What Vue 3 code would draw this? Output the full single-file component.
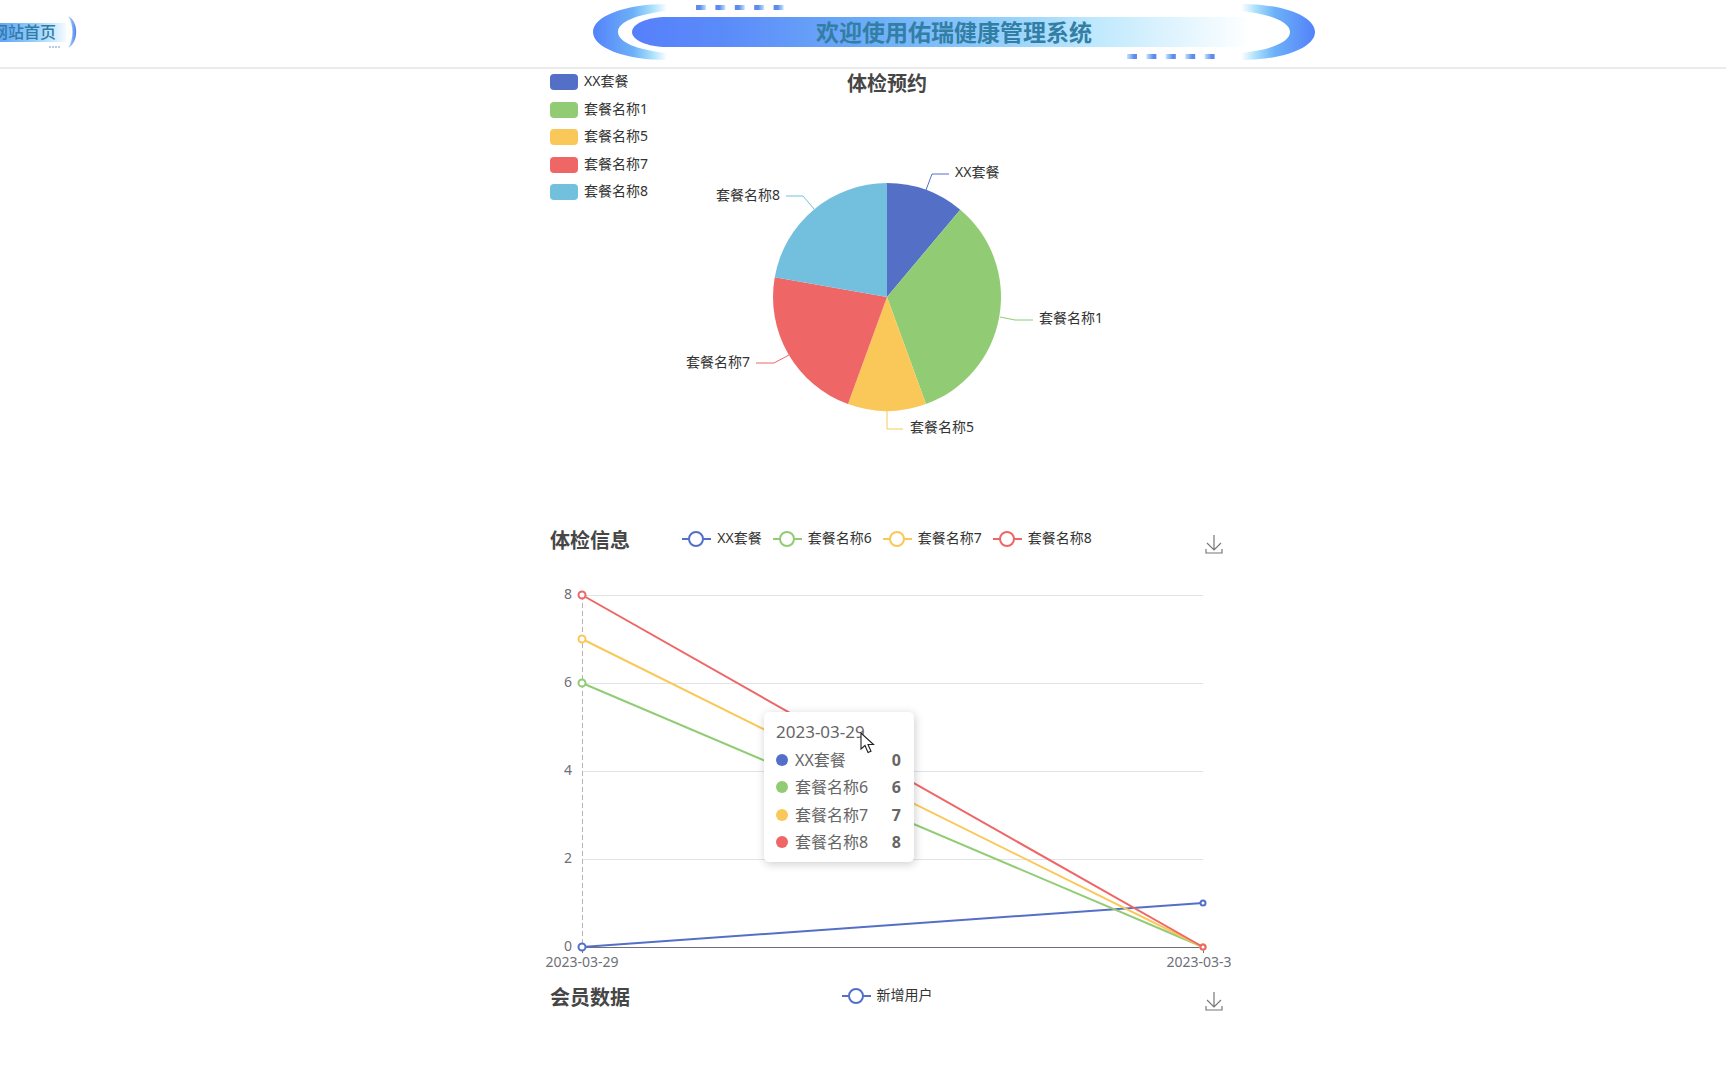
<script setup>
const palette = {
  blue: '#5470c6',
  green: '#91cc75',
  yellow: '#fac858',
  red: '#ee6666',
  cyan: '#73c0de'
}

const pie = { cx: 344, cy: 229, r: 114 }

const packages = [
  { name: 'XX套餐', count: 1, color: palette.blue, leader: '383,122 389,106 406,106', x: 412, y: 109, anchor: 'start' },
  { name: '套餐名称1', count: 3, color: palette.green, leader: '457,249 472,252 490,252', x: 496, y: 255, anchor: 'start' },
  { name: '套餐名称5', count: 1, color: palette.yellow, leader: '344,343 344,361 360,361', x: 367, y: 364, anchor: 'start' },
  { name: '套餐名称7', count: 2, color: palette.red, leader: '246,287 231,295 213,295', x: 207, y: 299, anchor: 'end' },
  { name: '套餐名称8', count: 2, color: palette.cyan, leader: '271,141 260,128 243,128', x: 237, y: 132, anchor: 'end' }
]

const total = packages.reduce((sum, p) => sum + p.count, 0)
let passed = 0
const slices = packages.map((p) => {
  const from = (passed / total) * Math.PI * 2
  passed += p.count
  const to = (passed / total) * Math.PI * 2
  const point = (a) => `${pie.cx + pie.r * Math.sin(a)},${pie.cy - pie.r * Math.cos(a)}`
  const large = to - from > Math.PI ? 1 : 0
  return { ...p, d: `M${pie.cx},${pie.cy} L${point(from)} A${pie.r},${pie.r} 0 ${large} 1 ${point(to)} Z` }
})

const plot = { left: 39, right: 660, bottom: 421, unit: 44 }
const yOf = (value) => plot.bottom - value * plot.unit
const ticks = [0, 2, 4, 6, 8]

const series = [
  { name: 'XX套餐', color: palette.blue, values: [0, 1] },
  { name: '套餐名称6', color: palette.green, values: [6, 0] },
  { name: '套餐名称7', color: palette.yellow, values: [7, 0] },
  { name: '套餐名称8', color: palette.red, values: [8, 0] }
]

const members = [{ name: '新增用户', color: palette.blue }]

const dots = [0, 1, 2, 3, 4]
</script>

<template>
  <div class="page">
    <header class="topbar">
      <nav class="nav">
        <a class="home" href="#">
          <svg class="home-frame" width="80" height="40" viewBox="0 0 80 40" aria-hidden="true">
            <defs>
              <linearGradient id="homePill" x1="0" x2="1">
                <stop offset="0" stop-color="#62a4f8" />
                <stop offset="0.5" stop-color="#93ccfa" />
                <stop offset="1" stop-color="#f2fbff" />
              </linearGradient>
              <linearGradient id="homeArc" x1="0" x2="1">
                <stop offset="0" stop-color="#b5e2fc" />
                <stop offset="1" stop-color="#4f80ee" />
              </linearGradient>
            </defs>
            <rect x="0" y="11" width="66" height="19" fill="url(#homePill)" />
            <path d="M68 4 C79 9 79 31 68 36 C74 27 74 13 68 4Z" fill="url(#homeArc)" />
            <g fill="#b9cbe0">
              <rect v-for="i in 4" :key="i" :x="46 + i * 3" y="34" width="2" height="2" />
            </g>
          </svg>
          <span class="home-label">网站首页</span>
        </a>
      </nav>
      <div class="banner">
        <svg class="banner-frame" width="722" height="60" viewBox="0 0 722 60" aria-hidden="true">
          <defs>
            <linearGradient id="pill" x1="0" x2="1">
              <stop offset="0" stop-color="#5680fb" />
              <stop offset="0.15" stop-color="#5b8bf9" />
              <stop offset="0.4" stop-color="#6eaff8" />
              <stop offset="0.58" stop-color="#8fcdfb" />
              <stop offset="0.74" stop-color="#bde8fd" />
              <stop offset="1" stop-color="#ffffff" />
            </linearGradient>
            <linearGradient id="arcLeft" x1="0" x2="1">
              <stop offset="0" stop-color="#5382fa" />
              <stop offset="0.55" stop-color="#6db1f8" />
              <stop offset="0.8" stop-color="#a9e0fc" />
              <stop offset="1" stop-color="#ffffff" />
            </linearGradient>
            <linearGradient id="arcRight" x1="1" x2="0">
              <stop offset="0" stop-color="#5382fa" />
              <stop offset="0.55" stop-color="#6db1f8" />
              <stop offset="0.8" stop-color="#a9e0fc" />
              <stop offset="1" stop-color="#ffffff" />
            </linearGradient>
            <linearGradient id="dashTop" x1="0" x2="1">
              <stop offset="0.4" stop-color="#5d8bee" />
              <stop offset="1" stop-color="#c3e6fb" />
            </linearGradient>
            <linearGradient id="dashBottom" x1="1" x2="0">
              <stop offset="0.3" stop-color="#5d8bee" />
              <stop offset="1" stop-color="#c3e6fb" />
            </linearGradient>
          </defs>
          <path d="M74 2 C30 2 0 15 0 30 C0 45 30 58 74 58 L74 51 C44 48 25 40 25 30 C25 20 44 12 74 9Z" fill="url(#arcLeft)" />
          <path d="M648 2 C692 2 722 15 722 30 C722 45 692 58 648 58 L648 51 C678 48 697 40 697 30 C697 20 678 12 648 9Z" fill="url(#arcRight)" />
          <path d="M658 15 H74 C54 15 39 22 39 30 C39 38 54 45 74 45 H658Z" fill="url(#pill)" />
          <rect v-for="i in dots" :key="'t' + i" :x="103 + i * 19.4" y="3" width="10" height="5" fill="url(#dashTop)" />
          <rect v-for="i in dots" :key="'b' + i" :x="534 + i * 19.4" y="52" width="10" height="5" fill="url(#dashBottom)" />
        </svg>
        <h1 class="banner-title">欢迎使用佑瑞健康管理系统</h1>
      </div>
    </header>

    <main class="content">
      <section class="chart">
        <div class="chart-head">
          <h2 class="title centered">体检预约</h2>
          <ul class="legend vertical">
            <li v-for="p in packages" :key="p.name">
              <i class="swatch" :style="{ background: p.color }"></i>
              <span>{{ p.name }}</span>
            </li>
          </ul>
        </div>
        <svg class="plot" viewBox="0 1 688 457" role="img" aria-label="体检预约">
          <path v-for="s in slices" :key="s.name" :d="s.d" :fill="s.color" />
          <g v-for="s in slices" :key="s.name + '-label'">
            <polyline :points="s.leader" fill="none" :stroke="s.color" stroke-width="1" />
            <text class="pie-label" :x="s.x" :y="s.y" :text-anchor="s.anchor">{{ s.name }}</text>
          </g>
        </svg>
      </section>

      <section class="chart">
        <div class="chart-head">
          <h2 class="title">体检信息</h2>
          <ul class="legend">
            <li v-for="s in series" :key="s.name">
              <svg width="29" height="16" viewBox="0 0 29 16" aria-hidden="true">
                <path d="M0 8H29" :stroke="s.color" stroke-width="2" />
                <circle cx="14" cy="8" r="7" fill="#fff" :stroke="s.color" stroke-width="2" />
              </svg>
              <span>{{ s.name }}</span>
            </li>
          </ul>
          <button class="save" type="button" aria-label="保存为图片">
            <svg width="18" height="20" viewBox="0 0 18 20" aria-hidden="true">
              <path d="M9 0V15M2 8L9 15L16 8M1 14V18H17V14" fill="none" stroke="#777" stroke-width="1.2" />
            </svg>
          </button>
        </div>
        <svg class="plot" viewBox="0 0 688 457" role="img" aria-label="体检信息">
          <g shape-rendering="crispEdges">
            <path v-for="t in ticks.slice(1)" :key="t" :d="`M${plot.left} ${yOf(t)}H${plot.right}`" stroke="#e0e3e8" />
            <path :d="`M${plot.left} ${yOf(0)}H${plot.right}M${plot.left} ${yOf(0)}v6M${plot.right} ${yOf(0)}v6`" stroke="#6e7079" />
            <path :d="`M${plot.left} ${yOf(8)}V${yOf(0)}`" stroke="#b4b4b4" stroke-dasharray="5 3" />
          </g>
          <text v-for="t in ticks" :key="'y' + t" class="axis" x="29" :y="yOf(t) + 4" text-anchor="end">{{ t }}</text>
          <text class="axis" :x="plot.left" y="441" text-anchor="middle">2023-03-29</text>
          <text class="axis" :x="plot.right" y="441" text-anchor="middle">2023-03-30</text>
          <g v-for="s in series" :key="s.name" :stroke="s.color" stroke-width="2" fill="#fff">
            <path :d="`M${plot.left} ${yOf(s.values[0])}L${plot.right} ${yOf(s.values[1])}`" />
            <circle :cx="plot.left" :cy="yOf(s.values[0])" r="3.5" />
            <circle :cx="plot.right" :cy="yOf(s.values[1])" r="2.5" />
          </g>
        </svg>
        <div class="tooltip">
          <div class="tip-date">2023-03-29</div>
          <ul class="tip-list">
            <li v-for="s in series" :key="s.name">
              <i class="dot" :style="{ background: s.color }"></i>
              <span>{{ s.name }}</span>
              <b>{{ s.values[0] }}</b>
            </li>
          </ul>
          <svg class="cursor" width="15" height="22" viewBox="0 0 15 22" aria-hidden="true">
            <path d="M1 1V17L5 13.5L8 20.5L11 19.2L8 12.5H13.5Z" fill="#fff" stroke="#222" stroke-width="1.1" />
          </svg>
        </div>
      </section>

      <section class="chart">
        <div class="chart-head">
          <h2 class="title">会员数据</h2>
          <ul class="legend">
            <li v-for="m in members" :key="m.name">
              <svg width="29" height="16" viewBox="0 0 29 16" aria-hidden="true">
                <path d="M0 8H29" :stroke="m.color" stroke-width="2" />
                <circle cx="14" cy="8" r="7" fill="#fff" :stroke="m.color" stroke-width="2" />
              </svg>
              <span>{{ m.name }}</span>
            </li>
          </ul>
          <button class="save" type="button" aria-label="保存为图片">
            <svg width="18" height="20" viewBox="0 0 18 20" aria-hidden="true">
              <path d="M9 0V15M2 8L9 15L16 8M1 14V18H17V14" fill="none" stroke="#777" stroke-width="1.2" />
            </svg>
          </button>
        </div>
      </section>
    </main>
  </div>
</template>

<style>
body {
  margin: 0;
  background: #fff;
}
</style>

<style scoped>
.page {
  height: 100vh;
  overflow: hidden;
  font-family: "Noto Sans", "Noto Sans CJK SC", sans-serif;
  font-size: 14px;
  color: #333;
}

ul {
  list-style: none;
  margin: 0;
  padding: 0;
}

.topbar {
  display: flex;
  height: 67px;
  border-bottom: 2px solid #ebebeb;
}

.nav {
  width: 182px;
  flex: none;
  padding-top: 12px;
}

.home {
  display: grid;
  width: 80px;
  height: 40px;
  align-items: center;
  text-decoration: none;
  color: #2f7ca6;
}

.home > *,
.banner > * {
  grid-area: 1 / 1;
}

.home-label {
  margin-left: -8px;
  font-size: 16px;
  line-height: 20px;
  font-weight: 500;
  white-space: nowrap;
}

.banner {
  flex: 1;
  display: grid;
  justify-items: center;
  align-items: center;
  height: 60px;
  margin-top: 2px;
}

.banner-title {
  margin: 0;
  font-size: 23px;
  line-height: 30px;
  font-weight: 700;
  color: #327ea5;
}

.content {
  padding-left: 48px;
}

.chart {
  position: relative;
  width: 688px;
  height: 457px;
  margin: 0 auto;
  overflow: hidden;
}

.chart-head {
  position: absolute;
  inset: 0 0 auto 0;
  display: grid;
  grid-template-columns: 1fr auto 1fr;
  align-items: start;
  padding: 5px 7px;
}

.chart-head > * {
  grid-row: 1;
}

.title {
  grid-column: 1;
  margin: 0;
  font-size: 20px;
  line-height: 20px;
  font-weight: 700;
  color: #464646;
}

.title.centered {
  grid-column: 2;
}

.legend {
  grid-column: 2;
  display: flex;
  gap: 11px;
}

.legend.vertical {
  grid-column: 1;
  flex-direction: column;
  justify-content: space-between;
  height: 126px;
}

.legend li {
  display: flex;
  align-items: center;
  gap: 6px;
  height: 16px;
  line-height: 14px;
  white-space: nowrap;
}

.legend span {
  padding-bottom: 2px;
}

.swatch {
  width: 28px;
  height: 16px;
  border-radius: 4px;
}

.save {
  grid-column: 3;
  justify-self: end;
  display: block;
  margin: 4px 1px 0 0;
  padding: 0;
  border: 0;
  background: none;
}

.save svg,
.plot,
.home-frame,
.banner-frame {
  display: block;
}

.plot {
  width: 100%;
}

.pie-label {
  fill: #333;
}

.axis {
  fill: #6e7079;
}

.tooltip {
  position: absolute;
  left: 221px;
  top: 186px;
  box-sizing: border-box;
  width: 150px;
  padding: 12px 13px 12px 12px;
  border-radius: 5px;
  background: #fff;
  box-shadow: 1px 2px 10px rgba(0, 0, 0, 0.2);
  font-size: 16px;
  line-height: 16px;
  color: #666;
}

.tip-date {
  margin-bottom: 12px;
  font-size: 17px;
}

.tip-list {
  display: flex;
  flex-direction: column;
  justify-content: space-between;
  height: 98px;
}

.tip-list li {
  display: flex;
  align-items: center;
  gap: 7px;
  height: 16px;
}

.tip-list b {
  margin-left: auto;
}

.dot {
  width: 12px;
  height: 12px;
  border-radius: 50%;
}

.cursor {
  position: absolute;
  left: 96px;
  top: 20px;
}
</style>
